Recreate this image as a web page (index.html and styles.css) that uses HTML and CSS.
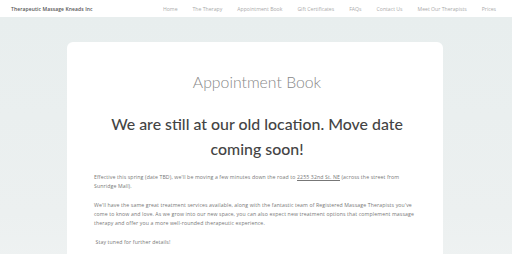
FILE: index.html
```html
<!DOCTYPE html>
<html lang="en">
<head>
    <meta charset="UTF-8">
    <meta name="viewport" content="width=device-width, initial-scale=1.0">
    <title>Appointment Book - Therapeutic Massage Kneads Inc</title>
    <link rel="stylesheet" href="styles.css">
</head>
<body>
    <header class="site-header">
        <div class="site-title">Therapeutic Massage Kneads Inc</div>
        <nav class="main-nav">
            <a href="#">Home</a>
            <a href="#">The Therapy</a>
            <a href="#">Appointment Book</a>
            <a href="#">Gift Certificates</a>
            <a href="#">FAQs</a>
            <a href="#">Contact Us</a>
            <a href="#">Meet Our Therapists</a>
            <a href="#">Prices</a>
        </nav>
    </header>

    <main class="page">
        <div class="content-card">
            <h1 class="page-title">Appointment Book</h1>
            <h2 class="notice">We are still at our old location. Move date coming soon!</h2>
            <p>Effective this spring (date TBD), we'll be moving a few minutes down the road to <a href="#">2255 32nd St. NE</a> (across the street from Sunridge Mall).</p>
            <p>We'll have the same great treatment services available, along with the fantastic team of Registered Massage Therapists you've come to know and love. As we grow into our new space, you can also expect new treatment options that complement massage therapy and offer you a more well-rounded therapeutic experience.</p>
            <p>&nbsp;Stay tuned for further details!</p>
        </div>
    </main>
</body>
</html>
```

FILE: styles.css
```css
html, body {
    margin: 0;
    height: 100%;
    overflow: hidden;
}
body {
    font-family: 'Lato', 'Open Sans', sans-serif;
    background-color: #e9efef; /* pale sage */
    color: #444;
}
.site-header {
    background-color: #ffffff;
    height: 17px;
    display: flex;
    align-items: center;
    justify-content: space-between;
    padding: 0 16px 0 11px;
}
.site-title {
    font-family: 'Open Sans', sans-serif;
    font-size: 5px;
    font-weight: 600;
    color: #555;
    letter-spacing: 0.1px;
}
.main-nav {
    display: flex;
    gap: 15px;
}
.main-nav a {
    font-family: 'Open Sans', sans-serif;
    font-size: 5.15px;
    color: #aaa;
    text-decoration: none;
}
.page {
    padding-top: 25px;
    display: flex;
    justify-content: center;
    background: linear-gradient(to bottom, #e8eeee 0%, #ecf0f0 70%, #f0f3f3 100%);
    height: 100%;
}
.content-card {
    background-color: #ffffff;
    border-radius: 6px;
    width: 376px;
    margin-left: -2px;
    box-sizing: border-box;
    padding: 30px 23px 0 27px;
}
.page-title {
    font-weight: 300;
    font-size: 15.8px;
    line-height: 20px;
    color: #888;
    text-align: center;
    margin: 0 0 19px;
}
.notice {
    font-weight: 500;
    font-size: 15.9px;
    line-height: 25px;
    color: #444;
    text-align: center;
    margin: 0 0 12px;
    padding: 0;
}
.content-card p {
    font-family: 'Open Sans', sans-serif;
    font-size: 5.2px;
    line-height: 9px;
    color: #777;
    letter-spacing: 0.12px;
    margin: 0 0 10px;
}
.content-card p a {
    color: #777;
}
```
